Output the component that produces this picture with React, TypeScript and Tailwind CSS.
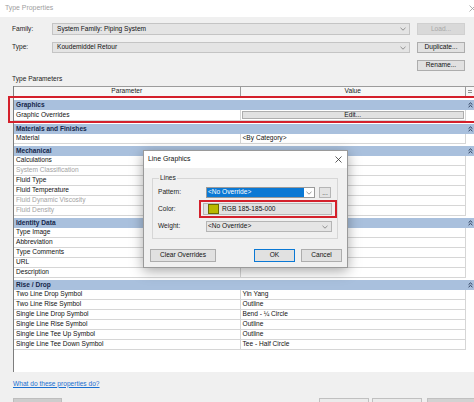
import React from 'react';

type Row = { name: string; value?: string; muted?: boolean };

const mechanical: Row[] = [
  { name: 'Calculations' },
  { name: 'System Classification', muted: true },
  { name: 'Fluid Type' },
  { name: 'Fluid Temperature' },
  { name: 'Fluid Dynamic Viscosity', muted: true },
  { name: 'Fluid Density', muted: true },
];

const identity: Row[] = [
  { name: 'Type Image' },
  { name: 'Abbreviation' },
  { name: 'Type Comments' },
  { name: 'URL' },
  { name: 'Description' },
];

const riseDrop: Row[] = [
  { name: 'Two Line Drop Symbol', value: 'Yin Yang' },
  { name: 'Two Line Rise Symbol', value: 'Outline' },
  { name: 'Single Line Drop Symbol', value: 'Bend - ¼ Circle' },
  { name: 'Single Line Rise Symbol', value: 'Outline' },
  { name: 'Single Line Tee Up Symbol', value: 'Outline' },
  { name: 'Single Line Tee Down Symbol', value: 'Tee - Half Circle' },
];

const Collapse = () => (
  <svg width="5" height="6" viewBox="0 0 5 6">
    <path d="M0.6 2.6 L2.5 0.9 L4.4 2.6 M0.6 5.1 L2.5 3.4 L4.4 5.1" fill="none" stroke="#1b2b4b" strokeWidth="0.9" />
  </svg>
);

const Chevron = ({ color = '#7a7a7a' }: { color?: string }) => (
  <svg width="6" height="4" viewBox="0 0 6 4">
    <path d="M0.5 0.8 L3 3.2 L5.5 0.8" fill="none" stroke={color} strokeWidth="0.8" />
  </svg>
);

function GroupBand({ title, gap }: { title: string; gap: string }) {
  return (
    <div className={`flex h-[10px] shrink-0 bg-[#a9c0dd] ${gap}`}>
      <div className="w-[453px] pl-[2px] flex items-center font-bold text-[#14264a]">{title}</div>
      <div className="w-[8px] flex items-center justify-center">
        <Collapse />
      </div>
    </div>
  );
}

function DataRow({ row }: { row: Row }) {
  return (
    <div className="flex h-[10px] shrink-0">
      <div
        className={`w-[227px] pl-[2px] flex items-center border-r border-b border-[#d6d6d6] ${
          row.muted ? 'text-[#a3a3a3]' : 'text-[#111]'
        }`}
      >
        {row.name}
      </div>
      <div className="w-[226px] pl-[2px] flex items-center border-r border-b border-[#d6d6d6] text-[#111]">
        {row.value}
      </div>
      <div className="w-[8px]" />
    </div>
  );
}

function LineGraphics() {
  return (
    <div className="absolute left-[143px] top-[150px] w-[205px] h-[118px] bg-[#f0f0f0] border border-[#9a9a9a] shadow-[0_3px_12px_rgba(0,0,0,0.35)] flex flex-col">
      <div className="h-[17px] bg-white flex items-center justify-between pl-[4px] pr-[5px] text-[#111] text-[6.9px]">
        <span>Line Graphics</span>
        <svg width="7" height="7" viewBox="0 0 7 7">
          <path d="M0.5 0.5 L6.5 6.5 M6.5 0.5 L0.5 6.5" stroke="#333" strokeWidth="0.8" />
        </svg>
      </div>

      <fieldset className="ml-[8px] mr-[9px] border border-[#d6d6d6] pl-[5px] pr-[4px] pb-[6px] mt-[6px]">
        <legend className="ml-[1px] px-[1px] leading-[8px] text-[#222]">Lines</legend>

        <div className="flex items-center h-[11px] mt-[5px]">
          <span className="w-[48px] text-[#222]">Pattern:</span>
          <div className="w-[109px] h-[11px] flex bg-white border border-[#9a9a9a]">
            <div className="flex-1 bg-[#0a78d4] text-white pl-[1px] flex items-center">&lt;No Override&gt;</div>
            <div className="w-[10px] flex items-center justify-center">
              <Chevron />
            </div>
          </div>
          <div className="ml-[4px] w-[12px] h-[11px] bg-[#e3e3e3] border border-[#b5b5b5] flex items-end justify-center pb-[2px] leading-[4px] text-[#333]">
            ...
          </div>
        </div>

        <div className="flex items-center h-[18px] mt-[2px]">
          <span className="w-[45px] text-[#222]">Color:</span>
          <div className="relative w-[129px] h-[12px] bg-[#e1e1e1] border border-[#b8b8b8] flex items-center pl-[4px] gap-[3px] text-[#111]">
            <div className="w-[11px] h-[10px] bg-[#b9b900] border border-[#6b6b00]" />
            <span>RGB 185-185-000</span>
            <div className="absolute -left-[5px] -right-[6px] -top-[4px] -bottom-[4px] border-2 border-[#d4202b]" />
          </div>
        </div>

        <div className="flex items-center h-[11px] mt-[3px]">
          <span className="w-[48px] text-[#222]">Weight:</span>
          <div className="w-[126px] h-[11px] flex items-center justify-between bg-[#e5e5e5] border border-[#b5b5b5] pl-[1px] pr-[3px] text-[#111]">
            <span>&lt;No Override&gt;</span>
            <Chevron />
          </div>
        </div>
      </fieldset>

      <div className="flex mt-[10px] pl-[6px] pr-[5px] h-[13px]">
        <div className="w-[66px] bg-[#e1e1e1] border border-[#adadad] flex items-center justify-center text-[#111]">
          Clear Overrides
        </div>
        <div className="ml-auto w-[41px] bg-[#e1e1e1] border border-[#0a78d4] flex items-center justify-center text-[#111]">
          OK
        </div>
        <div className="ml-[6px] w-[41px] bg-[#e1e1e1] border border-[#adadad] flex items-center justify-center text-[#111]">
          Cancel
        </div>
      </div>
    </div>
  );
}

export default function App() {
  return (
    <div className="relative w-[474px] h-[402px] overflow-hidden bg-[#f0f0f0] font-['Liberation_Sans',Arial,sans-serif] text-[6.6px] leading-none">
      {/* Title bar */}
      <div className="h-[17px] bg-white flex items-center justify-between pl-[5px] text-[#a0a0a0] text-[6.9px]">
        <span>Type Properties</span>
        <svg width="8" height="7" viewBox="0 0 8 7" className="-mr-[3px]">
          <path d="M0.5 0.5 L6.5 6.5 M6.5 0.5 L0.5 6.5" stroke="#9a9a9a" strokeWidth="0.8" />
        </svg>
      </div>

      <div className="pl-[12px] pr-[9px] flex flex-col">
        <div className="flex items-center mt-[6px] h-[12px]">
          <span className="w-[40px] text-[#222]">Family:</span>
          <div className="w-[358px] h-[12px] bg-[#e4e4e4] border border-[#c4c4c4] flex items-center justify-between pl-[4px] pr-[3px] text-[#111]">
            <span>System Family: Piping System</span>
            <Chevron />
          </div>
          <div className="ml-auto w-[48px] h-[12px] bg-[#d9d9d9] border border-[#d0d0d0] flex items-center justify-center text-[#a8a8a8]">
            Load...
          </div>
        </div>

        <div className="flex items-center mt-[7px] h-[11px]">
          <span className="w-[40px] text-[#222]">Type:</span>
          <div className="w-[358px] h-[11px] bg-[#e4e4e4] border border-[#c4c4c4] flex items-center justify-between pl-[4px] pr-[3px] text-[#111]">
            <span>Koudemiddel Retour</span>
            <Chevron />
          </div>
          <div className="ml-auto w-[48px] h-[11px] bg-[#e1e1e1] border border-[#adadad] flex items-center justify-center text-[#111]">
            Duplicate...
          </div>
        </div>

        <div className="flex justify-end mt-[7px] h-[11px]">
          <div className="w-[48px] h-[11px] bg-[#e1e1e1] border border-[#adadad] flex items-center justify-center text-[#111]">
            Rename...
          </div>
        </div>

        <div className="mt-[3px] h-[10px] flex items-center text-[#222]">Type Parameters</div>

        {/* Parameter grid */}
        <div className="mt-[2px] ml-[1px] -mr-[9px] h-[286px] bg-white border-l border-[#7d7d7d] flex flex-col">
          <div className="flex h-[11px] shrink-0 bg-[#f7f7f7] text-[#222]">
            <div className="w-[227px] border-t border-b border-r border-[#9c9c9c] flex items-center justify-center">
              Parameter
            </div>
            <div className="w-[226px] border-t border-b border-r border-[#9c9c9c] flex items-center justify-center">
              Value
            </div>
            <div className="w-[8px] border-t border-b border-[#9c9c9c] flex items-center justify-center">
              <svg width="4" height="5" viewBox="0 0 4 5">
                <path d="M0 1.5 H4 M0 3.5 H4" stroke="#777" strokeWidth="0.8" />
              </svg>
            </div>
          </div>

          <GroupBand title="Graphics" gap="mt-[3px]" />
          <div className="flex h-[11px] shrink-0">
            <div className="w-[227px] pl-[2px] flex items-center border-r border-b border-[#d6d6d6] text-[#111]">
              Graphic Overrides
            </div>
            <div className="w-[226px] border-r border-b border-[#d6d6d6] pl-[1px] pr-[1px] pt-[1px] pb-[1px]">
              <div className="h-full bg-[#e1e1e1] border border-[#adadad] flex items-center justify-center text-[#111]">
                Edit...
              </div>
            </div>
            <div className="w-[8px]" />
          </div>

          <GroupBand title="Materials and Finishes" gap="mt-[3px]" />
          <DataRow row={{ name: 'Material', value: '<By Category>' }} />

          <GroupBand title="Mechanical" gap="mt-[2px]" />
          {mechanical.map((r) => (
            <DataRow key={r.name} row={r} />
          ))}

          <GroupBand title="Identity Data" gap="mt-[2px]" />
          {identity.map((r) => (
            <DataRow key={r.name} row={r} />
          ))}

          <GroupBand title="Rise / Drop" gap="mt-[2px]" />
          {riseDrop.map((r) => (
            <DataRow key={r.name} row={r} />
          ))}
        </div>

        <div className="mt-[7px] h-[10px] flex items-center">
          <span className="ml-[1px] text-[#1a6fd0] underline">What do these properties do?</span>
        </div>

        <div className="mt-[9px] flex h-[20px] -mr-[9px]">
          <div className="ml-[1px] w-[49px] bg-[#cdcdcd] border border-[#bdbdbd]" />
          <div className="ml-auto w-[50px] bg-[#ebebeb] border border-[#c0c0c0]" />
          <div className="ml-[3px] w-[50px] bg-[#ebebeb] border border-[#c0c0c0]" />
          <div className="ml-[5px] w-[50px] -mr-[3px] bg-[#d2d2d2] border border-[#c0c0c0]" />
        </div>
      </div>

      {/* annotation around the Graphics group */}
      <div className="absolute left-[8px] top-[96px] w-[470px] h-[27px] border-2 border-[#d4202b]" />

      <LineGraphics />
    </div>
  );
}
